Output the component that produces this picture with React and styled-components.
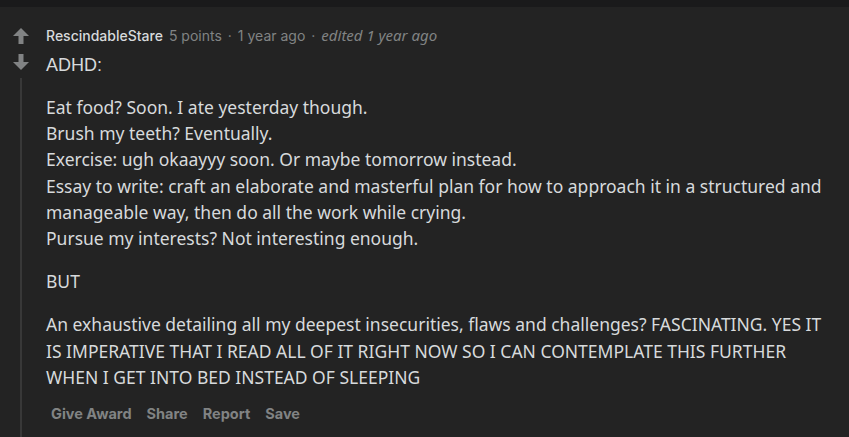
import React from "react";
import styled, { createGlobalStyle } from "styled-components";

const Global = createGlobalStyle`
  html, body { margin: 0; padding: 0; background: #232323; }
  body { width: 849px; height: 437px; overflow: hidden; }
`;

const Page = styled.div`
  width: 849px;
  height: 437px;
  background: #232323;
  display: flex;
  flex-direction: column;
`;

const TopBar = styled.div`
  height: 7px;
  background: #1a1a1b;
  flex-shrink: 0;
`;

const Comment = styled.div`
  display: flex;
  flex: 1;
  padding-top: 19px;
`;

const Gutter = styled.div`
  width: 46px;
  display: flex;
  flex-direction: column;
  align-items: center;
  padding-right: 4px;
  padding-top: 2px;
  box-sizing: border-box;
`;

const Vote = styled.button`
  width: 16px;
  height: 16px;
  padding: 0;
  border: 0;
  background: none;
  display: flex;
  margin-bottom: ${(p) => p.$gap || 0}px;
`;

const Thread = styled.div`
  width: 2px;
  flex: 1;
  margin-top: 8px;
  background: #383838;
`;

const Main = styled.div`
  flex: 1;
  padding-right: 20px;
`;

const Meta = styled.div`
  font-family: Inter, "Liberation Sans", sans-serif;
  font-size: 14px;
  line-height: 18px;
  color: #818384;
  display: flex;
  align-items: baseline;
  gap: 6px;
`;

const Author = styled.span`
  color: #d7dadc;
  font-weight: 500;
`;

const Edited = styled.span`
  font-family: "Noto Sans", sans-serif;
  font-style: italic;
  font-size: 15px;
`;

const Heading = styled.div`
  font-family: "Liberation Sans", Arial, sans-serif;
  font-size: 18px;
  line-height: 26px;
  color: #d7dadc;
  margin-top: 7px;
`;

const Body = styled.div`
  font-family: "Noto Sans", sans-serif;
  font-size: 17.5px;
  line-height: 26.2px;
  color: #d7dadc;
`;

const Para = styled.p`
  margin: 17px 0 0;
  &:first-child { margin-top: 16px; }
`;

const Actions = styled.div`
  display: flex;
  gap: 15px;
  margin-top: 15px;
  padding-left: 5px;
  font-family: Inter, "Liberation Sans", sans-serif;
  font-weight: 700;
  font-size: 14.5px;
  color: #818384;
`;

const Action = styled.span``;

const Arrow = ({ down }) => (
  <svg width="16" height="16" viewBox="0 0 16 16" style={down ? { transform: "rotate(180deg)" } : undefined}>
    <path d="M8 0 L16 8 L10.5 8 L10.5 16 L5.5 16 L5.5 8 L0 8 Z" fill="#818384" />
  </svg>
);

export default function App() {
  return (
    <Page>
      <Global />
      <TopBar />
      <Comment>
        <Gutter>
          <Vote $gap={10}><Arrow /></Vote>
          <Vote><Arrow down /></Vote>
          <Thread />
        </Gutter>
        <Main>
          <Meta>
            <Author>RescindableStare</Author>
            <span>5 points</span>
            <span>·</span>
            <span>1 year ago</span>
            <span>·</span>
            <Edited>edited 1 year ago</Edited>
          </Meta>
          <Heading>ADHD:</Heading>
          <Body>
            <Para>
              Eat food? Soon. I ate yesterday though.
              <br />
              Brush my teeth? Eventually.
              <br />
              Exercise: ugh okaayyy soon. Or maybe tomorrow instead.
              <br />
              Essay to write: craft an elaborate and masterful plan for how to approach it in a structured and manageable way, then do all the work while crying.
              <br />
              Pursue my interests? Not interesting enough.
            </Para>
            <Para>BUT</Para>
            <Para>
              An exhaustive detailing all my deepest insecurities, flaws and challenges? FASCINATING. YES IT IS IMPERATIVE THAT I READ ALL OF IT RIGHT NOW SO I CAN CONTEMPLATE THIS FURTHER WHEN I GET INTO BED INSTEAD OF SLEEPING
            </Para>
          </Body>
          <Actions>
            <Action>Give Award</Action>
            <Action>Share</Action>
            <Action>Report</Action>
            <Action>Save</Action>
          </Actions>
        </Main>
      </Comment>
    </Page>
  );
}
